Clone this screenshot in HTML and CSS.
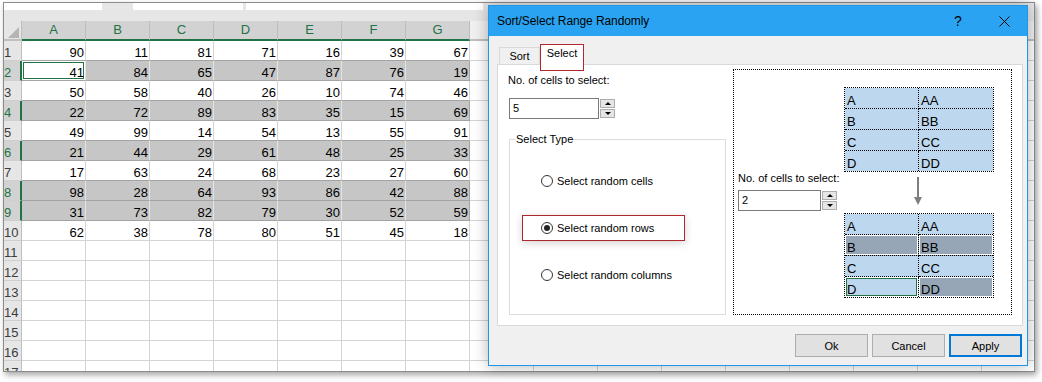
FILE: index.html
```html
<!DOCTYPE html>
<html>
<head>
<meta charset="utf-8">
<link rel="stylesheet" href="styles.css">
</head>
<body>
<div class="screen">
  <div class="sheet">
    <div class="strip"><span class="box b1"></span><span class="box b2"></span><span class="box b3"></span></div>
    <div class="hdr">
      <div class="corner"><svg width="11" height="11" viewBox="0 0 11 11"><polygon points="11,0 11,11 0,11" fill="#b4b4b4"/></svg></div>
      <div class="ch on">A</div><div class="ch on">B</div><div class="ch on">C</div><div class="ch on">D</div><div class="ch on">E</div><div class="ch on">F</div><div class="ch on">G</div>
      <div class="ch"></div><div class="ch"></div><div class="ch"></div><div class="ch"></div><div class="ch"></div><div class="ch"></div><div class="ch"></div><div class="ch"></div><div class="ch"></div>
    </div>
    <div class="row pre"><div class="rh">1</div><div class="c in">90</div><div class="c in">11</div><div class="c in">81</div><div class="c in">71</div><div class="c in">16</div><div class="c in">39</div><div class="c in last">67</div><div class="c"></div><div class="c"></div><div class="c"></div><div class="c"></div><div class="c"></div><div class="c"></div><div class="c"></div><div class="c"></div><div class="c"></div></div>
    <div class="row sel"><div class="rh">2</div><div class="c in act">41</div><div class="c in">84</div><div class="c in">65</div><div class="c in">47</div><div class="c in">87</div><div class="c in">76</div><div class="c in last">19</div><div class="c"></div><div class="c"></div><div class="c"></div><div class="c"></div><div class="c"></div><div class="c"></div><div class="c"></div><div class="c"></div><div class="c"></div></div>
    <div class="row pre"><div class="rh">3</div><div class="c in">50</div><div class="c in">58</div><div class="c in">40</div><div class="c in">26</div><div class="c in">10</div><div class="c in">74</div><div class="c in last">46</div><div class="c"></div><div class="c"></div><div class="c"></div><div class="c"></div><div class="c"></div><div class="c"></div><div class="c"></div><div class="c"></div><div class="c"></div></div>
    <div class="row sel"><div class="rh">4</div><div class="c in">22</div><div class="c in">72</div><div class="c in">89</div><div class="c in">83</div><div class="c in">35</div><div class="c in">15</div><div class="c in last">69</div><div class="c"></div><div class="c"></div><div class="c"></div><div class="c"></div><div class="c"></div><div class="c"></div><div class="c"></div><div class="c"></div><div class="c"></div></div>
    <div class="row pre"><div class="rh">5</div><div class="c in">49</div><div class="c in">99</div><div class="c in">14</div><div class="c in">54</div><div class="c in">13</div><div class="c in">55</div><div class="c in last">91</div><div class="c"></div><div class="c"></div><div class="c"></div><div class="c"></div><div class="c"></div><div class="c"></div><div class="c"></div><div class="c"></div><div class="c"></div></div>
    <div class="row sel"><div class="rh">6</div><div class="c in">21</div><div class="c in">44</div><div class="c in">29</div><div class="c in">61</div><div class="c in">48</div><div class="c in">25</div><div class="c in last">33</div><div class="c"></div><div class="c"></div><div class="c"></div><div class="c"></div><div class="c"></div><div class="c"></div><div class="c"></div><div class="c"></div><div class="c"></div></div>
    <div class="row pre"><div class="rh">7</div><div class="c in">17</div><div class="c in">63</div><div class="c in">24</div><div class="c in">68</div><div class="c in">23</div><div class="c in">27</div><div class="c in last">60</div><div class="c"></div><div class="c"></div><div class="c"></div><div class="c"></div><div class="c"></div><div class="c"></div><div class="c"></div><div class="c"></div><div class="c"></div></div>
    <div class="row sel"><div class="rh">8</div><div class="c in">98</div><div class="c in">28</div><div class="c in">64</div><div class="c in">93</div><div class="c in">86</div><div class="c in">42</div><div class="c in last">88</div><div class="c"></div><div class="c"></div><div class="c"></div><div class="c"></div><div class="c"></div><div class="c"></div><div class="c"></div><div class="c"></div><div class="c"></div></div>
    <div class="row sel"><div class="rh">9</div><div class="c in">31</div><div class="c in">73</div><div class="c in">82</div><div class="c in">79</div><div class="c in">30</div><div class="c in">52</div><div class="c in last">59</div><div class="c"></div><div class="c"></div><div class="c"></div><div class="c"></div><div class="c"></div><div class="c"></div><div class="c"></div><div class="c"></div><div class="c"></div></div>
    <div class="row"><div class="rh">10</div><div class="c in">62</div><div class="c in">38</div><div class="c in">78</div><div class="c in">80</div><div class="c in">51</div><div class="c in">45</div><div class="c in last">18</div><div class="c"></div><div class="c"></div><div class="c"></div><div class="c"></div><div class="c"></div><div class="c"></div><div class="c"></div><div class="c"></div><div class="c"></div></div>
    <div class="row"><div class="rh">11</div><div class="c"></div><div class="c"></div><div class="c"></div><div class="c"></div><div class="c"></div><div class="c"></div><div class="c"></div><div class="c"></div><div class="c"></div><div class="c"></div><div class="c"></div><div class="c"></div><div class="c"></div><div class="c"></div><div class="c"></div><div class="c"></div></div>
    <div class="row"><div class="rh">12</div><div class="c"></div><div class="c"></div><div class="c"></div><div class="c"></div><div class="c"></div><div class="c"></div><div class="c"></div><div class="c"></div><div class="c"></div><div class="c"></div><div class="c"></div><div class="c"></div><div class="c"></div><div class="c"></div><div class="c"></div><div class="c"></div></div>
    <div class="row"><div class="rh">13</div><div class="c"></div><div class="c"></div><div class="c"></div><div class="c"></div><div class="c"></div><div class="c"></div><div class="c"></div><div class="c"></div><div class="c"></div><div class="c"></div><div class="c"></div><div class="c"></div><div class="c"></div><div class="c"></div><div class="c"></div><div class="c"></div></div>
    <div class="row"><div class="rh">14</div><div class="c"></div><div class="c"></div><div class="c"></div><div class="c"></div><div class="c"></div><div class="c"></div><div class="c"></div><div class="c"></div><div class="c"></div><div class="c"></div><div class="c"></div><div class="c"></div><div class="c"></div><div class="c"></div><div class="c"></div><div class="c"></div></div>
    <div class="row"><div class="rh">15</div><div class="c"></div><div class="c"></div><div class="c"></div><div class="c"></div><div class="c"></div><div class="c"></div><div class="c"></div><div class="c"></div><div class="c"></div><div class="c"></div><div class="c"></div><div class="c"></div><div class="c"></div><div class="c"></div><div class="c"></div><div class="c"></div></div>
    <div class="row"><div class="rh">16</div><div class="c"></div><div class="c"></div><div class="c"></div><div class="c"></div><div class="c"></div><div class="c"></div><div class="c"></div><div class="c"></div><div class="c"></div><div class="c"></div><div class="c"></div><div class="c"></div><div class="c"></div><div class="c"></div><div class="c"></div><div class="c"></div></div>
    <div class="row"><div class="rh">17</div><div class="c"></div><div class="c"></div><div class="c"></div><div class="c"></div><div class="c"></div><div class="c"></div><div class="c"></div><div class="c"></div><div class="c"></div><div class="c"></div><div class="c"></div><div class="c"></div><div class="c"></div><div class="c"></div><div class="c"></div><div class="c"></div></div>
  </div>

  <div class="dialog">
    <div class="titlebar">
      <span class="title">Sort/Select Range Randomly</span>
      <span class="cap help">?</span>
      <span class="cap"><svg width="11" height="11" viewBox="0 0 11 11"><path d="M0.5 0.5 L10.5 10.5 M10.5 0.5 L0.5 10.5" stroke="#000" stroke-width="1" fill="none"/></svg></span>
    </div>
    <div class="body">
      <div class="tabs"><span class="tab">Sort</span><span class="tab active">Select</span></div>
      <div class="panel">
        <div class="left">
          <div class="lbl">No. of cells to select:</div>
          <div class="spin"><div class="inp">5</div><div class="arr"><span class="up"></span><span class="dn"></span></div></div>
          <fieldset class="grp">
            <legend>Select Type</legend>
            <label class="opt"><span class="radio"></span>Select random cells</label>
            <label class="opt hl"><span class="radio on"></span>Select random rows</label>
            <label class="opt"><span class="radio"></span>Select random columns</label>
          </fieldset>
        </div>
        <div class="demo">
          <div class="demo-l">
            <div class="lbl">No. of cells to select:</div>
            <div class="spin"><div class="inp small">2</div><div class="arr"><span class="up"></span><span class="dn"></span></div></div>
          </div>
          <div class="demo-r">
            <div class="tbl"><span>A</span><span>AA</span><span>B</span><span>BB</span><span>C</span><span>CC</span><span>D</span><span>DD</span></div>
            <div class="arrow"><svg width="150" height="41" viewBox="0 0 150 41"><rect x="73" y="5" width="2" height="21" fill="#7f7f7f"/><polygon points="70,25 78,25 74,33" fill="#7f7f7f"/></svg></div>
            <div class="tbl"><span>A</span><span>AA</span><span class="dk">B</span><span class="dk">BB</span><span>C</span><span>CC</span><span class="cur">D</span><span class="dk">DD</span></div>
          </div>
        </div>
      </div>
      <div class="btns"><button class="btn">Ok</button><button class="btn">Cancel</button><button class="btn def">Apply</button></div>
    </div>
  </div>
</div>
</body>
</html>
```

FILE: styles.css
```css
body {
  margin: 0;
  background: #fff;
  font-family: "Liberation Sans", Arial, sans-serif;
}

.screen {
  position: relative;
  width: 1042px;
  height: 382px;
  overflow: hidden;
}

/* ---------- spreadsheet ---------- */
.sheet {
  margin: 2px 0 0 3px;
  width: 1032px;
  height: 370px;
  box-sizing: border-box;
  border: 1px solid #8c8c8c;
  overflow: hidden;
  background: #fff;
  box-shadow: 2px 3px 6px rgba(0, 0, 0, 0.35);
}

.strip {
  height: 18px;
  background: #e6e6e6;
  display: flex;
}
.box { height: 7px; background: #fff; flex: none; }
.b1 { width: 98px; }
.b2 { width: 110px; margin-left: 31px; }
.b3 { width: 237px; margin-left: 3px; }

.hdr {
  display: flex;
  height: 20px;
}
.corner {
  flex: none;
  width: 18px;
  box-sizing: border-box;
  background: #e6e6e6;
  border-right: 1px solid #bfbfbf;
  border-bottom: 2px solid #bfbfbf;
  display: flex;
  align-items: flex-end;
  justify-content: flex-end;
  padding: 0 2px 1px 0;
}
.ch {
  flex: none;
  width: 64px;
  box-sizing: border-box;
  border-right: 1px solid #c6c6c6;
  border-bottom: 2px solid #bfbfbf;
  background: #f0f0f0;
  color: #444;
  font-size: 13px;
  line-height: 18px;
  text-align: center;
}
.ch.on {
  background: #d2d2d2;
  color: #217346;
  border-right-color: #bdbdbd;
  border-bottom-color: #217346;
}

.row {
  display: flex;
  height: 20px;
}
.rh {
  flex: none;
  width: 18px;
  box-sizing: border-box;
  background: #e6e6e6;
  border-right: 1px solid #bfbfbf;
  border-bottom: 1px solid #cfcfcf;
  font-size: 13px;
  color: #3c3c3c;
  padding: 4px 0 0 0;
  line-height: 16px;
  overflow: hidden;
  white-space: nowrap;
}
.sel .rh {
  background: #d2d2d2;
  color: #217346;
  border-right: 2px solid #217346;
}
.c {
  flex: none;
  width: 64px;
  box-sizing: border-box;
  border-right: 1px solid #d4d4d4;
  border-bottom: 1px solid #d4d4d4;
  font-size: 13px;
  text-align: right;
  padding: 4px 1px 0 0;
  line-height: 16px;
  color: #000;
}
.sel .in {
  background: #c6c6c6;
  border-right-color: #e4e4e4;
  border-bottom-color: #a3a3a3;
}
.sel .in.last { border-right-color: #a3a3a3; }
.pre .in { border-bottom-color: #a3a3a3; }
.sel .in.act {
  background: #fff;
  box-shadow: inset 0 0 0 1px #fff, inset 0 0 0 2px #217346;
}

/* ---------- dialog ---------- */
.dialog {
  position: absolute;
  left: 488px;
  top: 5px;
  width: 540px;
  height: 361px;
  box-sizing: border-box;
  border: 1px solid #2196e6;
  background: #f0f0f0;
  box-shadow: 0 0 14px rgba(0, 0, 0, 0.3);
  font-size: 11px;
  color: #000;
  display: flex;
  flex-direction: column;
}
.titlebar {
  height: 30px;
  flex: none;
  background: #2aa4f2;
  display: flex;
  align-items: center;
}
.title {
  flex: 1;
  padding-left: 8px;
  font-size: 12px;
  letter-spacing: -0.1px;
}
.cap {
  width: 46px;
  height: 30px;
  display: flex;
  align-items: center;
  justify-content: center;
}
.help { font-size: 14px; }

.body {
  flex: 1;
  padding: 8px 4px 8px 8px;
  display: flex;
  flex-direction: column;
}
.tabs {
  height: 20px;
  display: flex;
  align-items: flex-end;
  padding-left: 2px;
}
.tab {
  box-sizing: border-box;
  width: 41px;
  height: 17px;
  border: 1px solid #d9d9d9;
  border-bottom: none;
  text-align: center;
  line-height: 17px;
}
.tab.active {
  width: 44px;
  height: 21px;
  background: #fff;
  position: relative;
  z-index: 1;
  margin-bottom: -1px;
  line-height: 17px;
}
.tab.active::after {
  content: "";
  position: absolute;
  left: -1px;
  top: -1px;
  width: 44px;
  height: 27px;
  box-sizing: border-box;
  border: 1px solid #b0282d;
}

.panel {
  width: 526px;
  height: 262px;
  box-sizing: border-box;
  border: 1px solid #d9d9d9;
  background: #fff;
  display: flex;
  gap: 7px;
  padding: 4px 10px 10px 10px;
}
.left {
  width: 218px;
  flex: none;
  display: flex;
  flex-direction: column;
}
.lbl {
  line-height: 14px;
  margin-top: 4px;
  white-space: nowrap;
}
.spin {
  display: flex;
  gap: 1px;
  height: 21px;
  margin: 11px 0 0 1px;
}
.inp {
  width: 90px;
  box-sizing: border-box;
  border: 1px solid #7a7a7a;
  background: #fff;
  padding-left: 3px;
  line-height: 19px;
}
.inp.small { width: 83px; }
.arr {
  width: 15px;
  display: flex;
  flex-direction: column;
  justify-content: center;
  gap: 1px;
}
.arr span {
  height: 9px;
  box-sizing: border-box;
  border: 1px solid #adadad;
  background: #e5e5e5;
  display: flex;
  align-items: center;
  justify-content: center;
}
.arr span::before {
  content: "";
  width: 0;
  height: 0;
  border-left: 3px solid transparent;
  border-right: 3px solid transparent;
}
.arr .up::before { border-bottom: 3px solid #000; }
.arr .dn::before { border-top: 3px solid #000; }

.grp {
  margin: 13px 0 0 1px;
  padding: 22px 0 0 0;
  border: 1px solid #dcdcdc;
  flex: 1;
  min-width: 0;
  display: flex;
  flex-direction: column;
  gap: 21px;
}
.grp legend {
  padding: 0;
  margin-left: 6px;
  line-height: 14px;
  font-size: 11px;
}
.opt {
  height: 26px;
  width: 163px;
  box-sizing: border-box;
  border: 1px solid transparent;
  margin-left: 12px;
  display: flex;
  align-items: center;
  padding-left: 18px;
  white-space: nowrap;
}
.opt.hl {
  border-color: #b0282d;
  box-shadow: 0 2px 8px rgba(0, 0, 0, 0.18);
}
.radio {
  width: 12px;
  height: 12px;
  box-sizing: border-box;
  border: 1px solid #333;
  border-radius: 50%;
  background: #fff;
  margin-right: 4px;
  display: flex;
  align-items: center;
  justify-content: center;
  flex: none;
}
.radio.on::after {
  content: "";
  width: 6px;
  height: 6px;
  border-radius: 50%;
  background: #222;
}

.demo {
  width: 279px;
  flex: none;
  box-sizing: border-box;
  border: 1px dotted #000;
  display: flex;
}
.demo-l {
  width: 106px;
  flex: none;
  margin: 101px 0 0 4px;
}
.demo-l .lbl { margin-top: 0; }
.demo-l .spin { margin: 5px 0 0 0; }
.demo-r {
  width: 150px;
  flex: none;
  margin-top: 17px;
}
.tbl {
  display: grid;
  grid-template-columns: 74px 74px;
  width: 150px;
  box-sizing: border-box;
  border: 1px dotted #000;
}
.tbl span {
  height: 21px;
  box-sizing: border-box;
  border-bottom: 1px dotted #000;
  background: #bdd7ee;
  font-size: 13px;
  line-height: 15px;
  padding: 5px 0 0 2px;
}
.tbl span:nth-child(odd) { border-right: 1px dotted #000; }
.tbl span:nth-last-child(-n+2) { border-bottom: none; height: 20px; }
.tbl span.dk {
  background: #97a6b7;
  box-shadow: inset 0 0 0 1px #fff;
}
.tbl span.cur {
  box-shadow: inset 0 0 0 1px #fff, inset 0 0 0 2px #217346;
}
.arrow { height: 41px; }
.arrow svg { display: block; }

.btns {
  display: flex;
  justify-content: flex-end;
  gap: 4px;
  margin-top: 8px;
  padding-right: 1px;
}
.btn {
  width: 73px;
  height: 23px;
  box-sizing: border-box;
  border: 1px solid #adadad;
  background: #e1e1e1;
  font-family: "Liberation Sans", Arial, sans-serif;
  font-size: 11px;
  color: #000;
  padding: 0;
}
.btn.def { border: 2px solid #0078d7; }
```
